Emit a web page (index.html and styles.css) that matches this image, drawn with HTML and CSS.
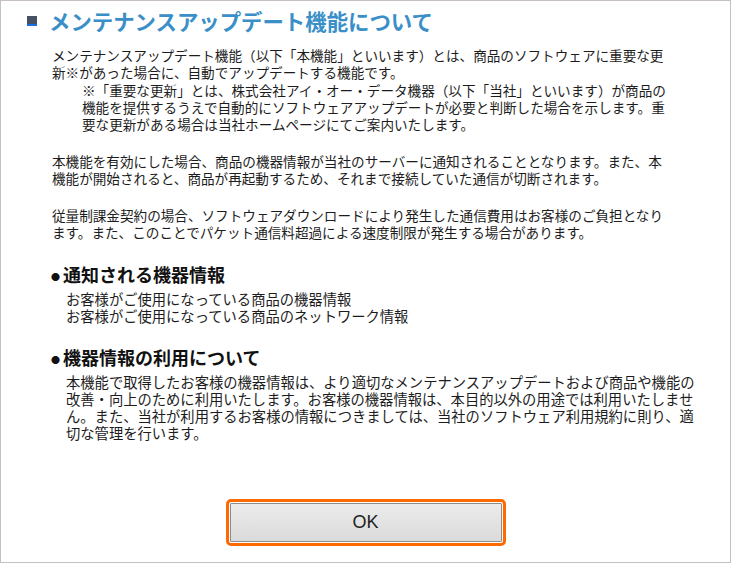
FILE: index.html
```html
<!DOCTYPE html>
<html lang="ja">
<head>
<meta charset="utf-8">
<link rel="stylesheet" href="styles.css">
</head>
<body>
<div class="dialog">
  <h1 class="title"><span class="square"></span><span>メンテナンスアップデート機能について</span></h1>
  <div class="content">
    <p class="para first">メンテナンスアップデート機能（以下「本機能」といいます）とは、商品のソフトウェアに重要な更<br>新※があった場合に、自動でアップデートする機能です。</p>
    <p class="note">※「重要な更新」とは、株式会社アイ・オー・データ機器（以下「当社」といいます）が商品の<br>機能を提供するうえで自動的にソフトウェアアップデートが必要と判断した場合を示します。重<br>要な更新がある場合は当社ホームページにてご案内いたします。</p>
    <p class="para">本機能を有効にした場合、商品の機器情報が当社のサーバーに通知されることとなります。また、本<br>機能が開始されると、商品が再起動するため、それまで接続していた通信が切断されます。</p>
    <p class="para">従量制課金契約の場合、ソフトウェアダウンロードにより発生した通信費用はお客様のご負担となり<br>ます。また、このことでパケット通信料超過による速度制限が発生する場合があります。</p>
    <h2 class="heading"><span class="bullet">●</span>通知される機器情報</h2>
    <p class="sub">お客様がご使用になっている商品の機器情報<br>お客様がご使用になっている商品のネットワーク情報</p>
    <h2 class="heading"><span class="bullet">●</span>機器情報の利用について</h2>
    <p class="sub">本機能で取得したお客様の機器情報は、より適切なメンテナンスアップデートおよび商品や機能の<br>改善・向上のために利用いたします。お客様の機器情報は、本目的以外の用途では利用いたしませ<br>ん。また、当社が利用するお客様の情報につきましては、当社のソフトウェア利用規約に則り、適<br>切な管理を行います。</p>
  </div>
  <div class="actions">
    <div class="focus-ring"><button class="ok" type="button">OK</button></div>
  </div>
</div>
</body>
</html>
```
FILE: styles.css
```css
html, body {
  margin: 0;
  padding: 0;
  background: #ffffff;
}

.dialog {
  box-sizing: border-box;
  width: 731px;
  height: 563px;
  border: 1px solid #c6c1c0;
  display: flex;
  flex-direction: column;
  font-family: "Noto Sans CJK JP", "Noto Sans", sans-serif;
  color: #1c1c1c;
  text-spacing-trim: space-all;
}

.title {
  display: flex;
  align-items: center;
  gap: 12px;
  margin: 0;
  padding: 8px 0 0 26px;
  font-size: 21.4px;
  line-height: 24px;
  font-weight: bold;
  color: #3a8fc8;
  white-space: nowrap;
}

.square {
  box-sizing: border-box;
  width: 10px;
  height: 10px;
  background: #465164;
  border-bottom: 2px solid #1a6fe8;
}

.content {
  padding: 14px 0 0 51px;
  font-size: 13.6px;
  line-height: 17px;
  white-space: nowrap;
}

.content p {
  margin: 0;
}

.content .para {
  margin-top: 20px;
}

.content .para.first {
  margin-top: 0;
}

.content .note {
  margin-top: 1px;
  padding-left: 30px;
}

.heading {
  margin: 21px 0 4px -1px;
  font-size: 18px;
  line-height: 24px;
  font-weight: bold;
  color: #111;
}

.bullet {
  font-size: 9px;
  line-height: 0;
  margin-right: 3px;
  vertical-align: 2px;
}

.content .sub {
  padding-left: 14px;
  font-size: 14.3px;
}

.actions {
  margin-top: auto;
  padding-bottom: 16px;
  display: flex;
  justify-content: center;
}

.focus-ring {
  border: 3px solid #ff6a00;
  border-radius: 5px;
  padding: 1px;
  display: flex;
}

.ok {
  width: 272px;
  height: 39px;
  margin: 0;
  border: 1px solid #8c8c8c;
  border-radius: 1px;
  background: linear-gradient(#ececec, #dadada);
  font-family: "Liberation Sans", Arial, sans-serif;
  font-size: 18px;
  color: #222;
  padding: 0;
}
```
